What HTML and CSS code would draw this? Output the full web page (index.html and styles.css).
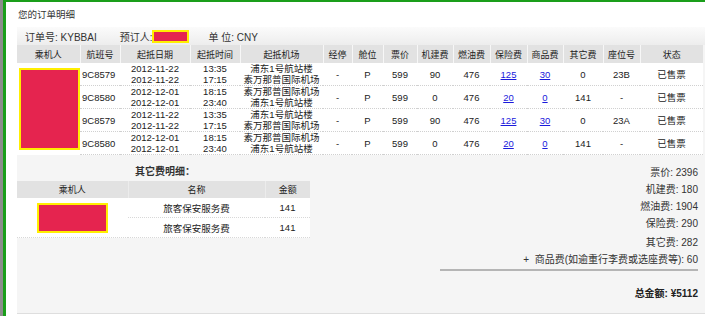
FILE: index.html
```html
<!DOCTYPE html>
<html>
<head>
<meta charset="utf-8">
<link rel="stylesheet" href="styles.css">
</head>
<body>
<div class="frame">
  <div class="inner">
    <div class="title">您的订单明细</div>
    <div class="panel">
      <div class="infobar">
        <span class="info-item">订单号: KYBBAI</span>
        <span class="info-item booker">预订人:<span class="mask mask-small"></span></span>
        <span class="info-item unit">单 位: CNY</span>
      </div>
      <table class="flights">
        <colgroup>
          <col style="width:63px"><col style="width:40px"><col style="width:70px"><col style="width:50px">
          <col style="width:83px"><col style="width:29px"><col style="width:31px"><col style="width:34px">
          <col style="width:36px"><col style="width:37px"><col style="width:37px"><col style="width:36px">
          <col style="width:40px"><col style="width:37px"><col style="width:63px">
        </colgroup>
        <thead>
          <tr>
            <th>乘机人</th><th>航班号</th><th>起抵日期</th><th>起抵时间</th><th>起抵机场</th><th>经停</th><th>舱位</th><th>票价</th><th>机建费</th><th>燃油费</th><th>保险费</th><th>商品费</th><th>其它费</th><th>座位号</th><th>状态</th>
          </tr>
        </thead>
        <tbody>
          <tr>
            <td rowspan="4" class="pax"><div class="mask mask-big"></div></td>
            <td class="fno">9C8579</td>
            <td>2012-11-22<br>2012-11-22</td>
            <td>13:35<br>17:15</td>
            <td>浦东1号航站楼<br>素万那普国际机场</td>
            <td>-</td><td>P</td><td>599</td><td>90</td><td>476</td>
            <td><a href="#">125</a></td><td><a href="#">30</a></td><td>0</td><td>23B</td><td>已售票</td>
          </tr>
          <tr>
            <td class="fno">9C8580</td>
            <td>2012-12-01<br>2012-12-01</td>
            <td>18:15<br>23:40</td>
            <td>素万那普国际机场<br>浦东1号航站楼</td>
            <td>-</td><td>P</td><td>599</td><td>0</td><td>476</td>
            <td><a href="#">20</a></td><td><a href="#">0</a></td><td>141</td><td>-</td><td>已售票</td>
          </tr>
          <tr>
            <td class="fno">9C8579</td>
            <td>2012-11-22<br>2012-11-22</td>
            <td>13:35<br>17:15</td>
            <td>浦东1号航站楼<br>素万那普国际机场</td>
            <td>-</td><td>P</td><td>599</td><td>90</td><td>476</td>
            <td><a href="#">125</a></td><td><a href="#">30</a></td><td>0</td><td>23A</td><td>已售票</td>
          </tr>
          <tr>
            <td class="fno">9C8580</td>
            <td>2012-12-01<br>2012-12-01</td>
            <td>18:15<br>23:40</td>
            <td>素万那普国际机场<br>浦东1号航站楼</td>
            <td>-</td><td>P</td><td>599</td><td>0</td><td>476</td>
            <td><a href="#">20</a></td><td><a href="#">0</a></td><td>141</td><td>-</td><td>已售票</td>
          </tr>
        </tbody>
      </table>
      <div class="lower">
        <div class="other">
          <div class="other-title">其它费明细：</div>
          <table class="fees">
            <colgroup><col style="width:111px"><col style="width:137px"><col style="width:45px"></colgroup>
            <thead><tr><th>乘机人</th><th>名称</th><th>金额</th></tr></thead>
            <tbody>
              <tr><td rowspan="2" class="pax2"><div class="mask mask-mid"></div></td><td>旅客保安服务费</td><td>141</td></tr>
              <tr><td>旅客保安服务费</td><td>141</td></tr>
            </tbody>
          </table>
        </div>
        <div class="summary">
          <div class="sline">票价: 2396</div>
          <div class="sline">机建费: 180</div>
          <div class="sline">燃油费: 1904</div>
          <div class="sline">保险费: 290</div>
          <div class="sline gap">其它费: 282</div>
          <div class="sline">+&nbsp;&nbsp;商品费(如逾重行李费或选座费等): 60</div>
          <div class="rule"></div>
          <div class="total">总金额: ¥5112</div>
        </div>
      </div>
    </div>
  </div>
</div>
</body>
</html>
```
FILE: styles.css
```css
html, body {
  margin: 0;
  padding: 0;
  background: #fff;
  font-family: "Liberation Sans", "Noto Sans CJK SC", sans-serif;
  color: #2a2a2a;
}
.frame {
  width: 705px;
  height: 316px;
  border-left: 3px solid #8c8c8c;
  box-sizing: border-box;
}
.inner {
  height: 100%;
  border-left: 3px solid #1a9e1a;
  border-top: 2px solid #1a9e1a;
  box-sizing: border-box;
  padding-left: 11px;
}
.title {
  height: 25px;
  line-height: 25px;
  font-size: 9.5px;
  padding-left: 1px;
  color: #333;
}
.panel {
  width: 688px;
  height: 287px;
  background: #f5f5f5;
  border-bottom: 1px solid #dedede;
  box-sizing: border-box;
}
.infobar {
  height: 18px;
  display: flex;
  align-items: center;
  font-size: 10px;
  background: linear-gradient(#fbfbfb, #ededed);
  padding-left: 8px;
  color: #333;
}
.info-item { display: inline-flex; align-items: center; }
.booker { margin-left: 23px; }
.unit { margin-left: 19px; }
.mask {
  background: #e5244f;
  border: 2px solid #ffee00;
  box-sizing: border-box;
}
.mask-small { width: 37px; height: 13px; }
.mask-big { width: 61px; height: 82px; margin-left: 2px; }
.mask-mid { width: 71px; height: 30px; margin: 0 auto; }
table { border-collapse: collapse; table-layout: fixed; }
.flights { width: 686px; }
.flights th {
  height: 18px;
  padding: 0;
  background: #e2e2e2;
  border-left: 1px solid #f7f7f7;
  font-size: 9px;
  font-weight: normal;
  color: #222;
  text-align: center;
}
.flights th:first-child { border-left: none; }
.flights td {
  height: 21px;
  padding: 0;
  background: #fff;
  font-size: 9.5px;
  line-height: 11px;
  text-align: center;
  border-bottom: 1px dotted #d0d0d0;
  white-space: nowrap;
  color: #222;
}
.flights td.pax { border-bottom: none; }
.flights td.fno { text-align: left; padding-left: 2px; }
a { color: #1a1adc; text-decoration: underline; }
.lower {
  display: flex;
  justify-content: space-between;
}
.other { width: 293px; }
.other-title {
  font-size: 10px;
  font-weight: bold;
  padding-left: 118px;
  padding-top: 8px;
  height: 18px;
  line-height: 18px;
  color: #333;
}
.fees { width: 293px; }
.fees th {
  height: 17px;
  padding: 0;
  background: #e2e2e2;
  font-size: 9px;
  font-weight: normal;
  color: #222;
  border-left: 1px solid #ececec;
}
.fees th:first-child { border-left: none; }
.fees td {
  height: 19px;
  padding: 0;
  background: #fff;
  font-size: 9.5px;
  text-align: center;
  border-bottom: 1px dotted #d8d8d8;
  color: #222;
}
.summary {
  width: 258px;
  margin-right: 7px;
  padding-top: 9px;
  font-size: 10px;
  text-align: right;
  color: #333;
}
.sline { height: 17px; line-height: 17px; }
.sline.gap { margin-top: 2px; }
.rule {
  height: 2px;
  background: #b5b5b5;
  margin-top: 1px;
}
.total {
  margin-top: 16px;
  font-weight: bold;
  line-height: 14px;
  color: #222;
}
```
